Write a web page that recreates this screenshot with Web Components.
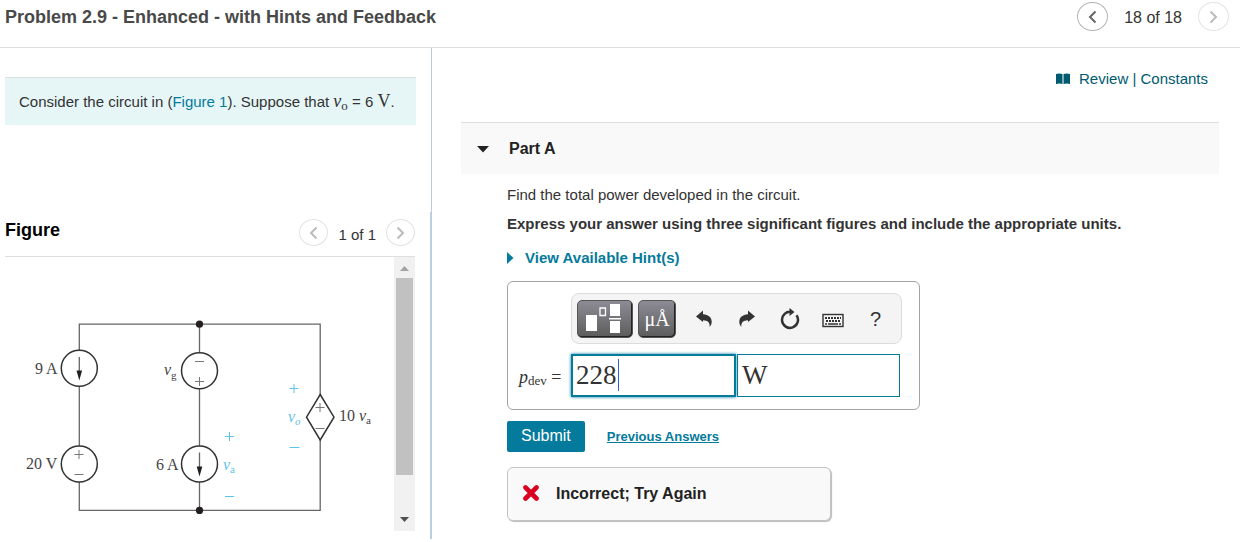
<!DOCTYPE html>
<html lang="en">
<head>
<meta charset="utf-8">
<meta name="viewport" content="width=device-width, initial-scale=1">
<title>Problem 2.9</title>
<style>
body {
  margin: 0;
  background: #fff;
  color: #333;
  font-family: "Liberation Sans", Arial, sans-serif;
  font-size: 15px;
  line-height: 20px;
  --teal: #047a9c;
  --teal-dark: #005a70;
  --rule: #dedede;
  --math: "Liberation Serif", "Times New Roman", serif;
}
</style>
</head>
<body>
<problem-page></problem-page>

<script>
class pagerNav extends HTMLElement {
  constructor() {
    super();
    this.shadowDOM = this.attachShadow({mode: 'open'});
  }

  connectedCallback() {
    const off = (dir) => this.getAttribute('disabled').includes(dir) ? 'disabled' : '';
    this.shadowDOM.innerHTML = `
    <style>
    :host {
        display: flex;
        gap: 16px;
        --size: 31px;
    }
    :host([small]) {
        gap: 10px;
        --size: 29px;
    }
    button {
        display: flex;
        align-items: center;
        justify-content: center;
        width: var(--size);
        height: calc(var(--size) - 2px);
        padding: 0;
        border: 1px solid #b4b4b4;
        border-radius: 50%;
        background: #fff;
        color: #666;
    }
    button:disabled {
        border-color: #e3e3e3;
        color: #bbb;
    }
    svg {
        fill: none;
        stroke: currentColor;
        stroke-width: 2;
    }
    span {
        padding-top: 6px;
    }
    </style>
    <button type="button" aria-label="Previous" ${off('prev')}>
        <svg width="9" height="14" viewBox="0 0 9 14"><path d="M7.5 1.500 2 7l5.500 5.500"/></svg>
    </button>
    <span><slot></slot></span>
    <button type="button" aria-label="Next" ${off('next')}>
        <svg width="9" height="14" viewBox="0 0 9 14"><path d="M1.5 1.500 7 7l-5.500 5.500"/></svg>
    </button>
    `
  }
}

class problemHeader extends HTMLElement {
  constructor() {
    super();
    this.shadowDOM = this.attachShadow({mode: 'open'});
    this.shadowDOM.innerHTML = `
    <style>
    :host {
        display: flex;
        justify-content: space-between;
        align-items: flex-start;
        min-height: 45px;
        padding: 2px 11px 0 5px;
        border-bottom: 1px solid var(--rule);
    }
    h1 {
        margin: 0;
        padding-top: 5px;
        color: #494949;
        font-size: 18px;
        font-weight: 700;
    }
    pager-nav {
        font-size: 16px;
    }
    </style>
    <h1><slot></slot></h1>
    <pager-nav disabled="next">18 of 18</pager-nav>
    `
  }
}

class problemIntro extends HTMLElement {
  constructor() {
    super();
    this.shadowDOM = this.attachShadow({mode: 'open'});
    this.shadowDOM.innerHTML = `
    <style>
    :host {
        display: block;
        min-height: 135px;
        padding: 29px 15px 0 5px;
        border-right: 1px solid #bccbde;
    }
    p {
        margin: 0;
        padding: 14px 14px 13px;
        border-top: 1px solid #dadfdf;
        background: #e6f6f7;
    }
    a {
        color: var(--teal);
        text-decoration: none;
    }
    i, b {
        font-family: var(--math);
        font-size: 18px;
        font-weight: 400;
        line-height: 1px;
    }
    sub {
        font-family: var(--math);
        font-size: 13px;
        line-height: 1px;
        vertical-align: -3px;
    }
    </style>
    <p>Consider the circuit in (<a href="#figure">Figure 1</a>). Suppose that <i>v</i><sub>o</sub> = 6 <b>V</b>.</p>
    `
  }
}

class circuitDiagram extends HTMLElement {
  constructor() {
    super();
    this.shadowDOM = this.attachShadow({mode: 'open'});
    this.shadowDOM.innerHTML = `
    <style>
    :host {
        display: block;
    }
    svg {
        display: block;
        max-width: 100%;
    }
    .wire {
        fill: none;
        stroke: #666;
        stroke-width: 1.3;
    }
    .source {
        fill: #fff;
        stroke: #333;
        stroke-width: 1.5;
    }
    .sign {
        fill: none;
        stroke: #777;
    }
    .solid {
        fill: #231f20;
    }
    text {
        fill: #444;
        font-family: var(--math);
        font-size: 16px;
    }
    .v {
        font-style: italic;
    }
    .sub {
        font-size: 11px;
    }
    .blue text {
        fill: #5bc4ea;
    }
    .blue path {
        stroke: #5bc4ea;
    }
    </style>
    <svg width="389" height="274" viewBox="0 0 389 274" role="img" aria-label="Circuit">
        <path class="wire" d="M74.3 67.2H315.2V253.4H74.3ZM194.5 67.2V253.4"/>
        <g class="solid">
            <circle cx="194.5" cy="67.2" r="3.6"/>
            <circle cx="194.5" cy="253.4" r="3.6"/>
        </g>
        <g class="source">
            <circle cx="74.3" cy="111.2" r="18"/>
            <circle cx="74.3" cy="207" r="18"/>
            <circle cx="194.5" cy="113.8" r="18"/>
            <circle cx="194.5" cy="207" r="18"/>
            <path d="M315.2 137.5 329 160.2 315.2 183 301.5 160.2Z"/>
        </g>
        <path class="wire" d="M74.3 100V116M194.5 195.5V211"/>
        <path class="solid" d="M71.5 113.5h5.6l-2.8 10zM191.7 209.5h5.6l-2.8 10z"/>
        <path class="sign" d="M190 104.500h9M190 124.500h9M194.500 120v9M69.500 197.500h9M74 193v9M69.500 217.500h9M310.500 150.500h9M315 146v9M310.500 171.500h9"/>
        <text x="30" y="117">9 A</text>
        <text x="21" y="212">20 V</text>
        <text x="151" y="213">6 A</text>
        <text x="159" y="118"><tspan class="v">v</tspan><tspan class="sub" dy="4">g</tspan></text>
        <text x="334" y="164">10 <tspan class="v">v</tspan><tspan class="sub" dy="3">a</tspan></text>
        <g class="blue">
            <path class="sign" d="M284.500 131.500h9M289 127v9M284.500 190.500h10M220 179.500h9M224.500 175v9M220 239.500h9"/>
            <text x="283" y="165"><tspan class="v">v</tspan><tspan class="v sub" dy="3">o</tspan></text>
            <text x="218" y="213"><tspan class="v">v</tspan><tspan class="sub" dy="3">a</tspan></text>
        </g>
    </svg>
    `
  }
}

class figurePanel extends HTMLElement {
  constructor() {
    super();
    this.shadowDOM = this.attachShadow({mode: 'open'});
    this.shadowDOM.innerHTML = `
    <style>
    :host {
        display: block;
        padding: 0 15px 8px 5px;
        border-right: 2px solid #bccfe2;
    }
    header {
        display: flex;
        justify-content: space-between;
        min-height: 37px;
        padding-top: 7px;
        border-bottom: 1px solid var(--rule);
    }
    h2 {
        margin: 0;
        padding-top: 1px;
        color: #000;
        font-size: 18px;
    }
    .view {
        display: flex;
        justify-content: space-between;
    }
    .bar {
        display: flex;
        flex-direction: column;
        align-items: center;
        flex: none;
        width: 21px;
        background: #f1f1f1;
    }
    .bar svg {
        flex: none;
    }
    .thumb {
        width: 17px;
        flex: 1;
        background: #c1c1c1;
    }
    .track {
        height: 35px;
    }
    </style>
    <header>
        <h2>Figure</h2>
        <pager-nav small disabled="prev next">1 of 1</pager-nav>
    </header>
    <div class="view" id="figure">
        <slot></slot>
        <div class="bar">
            <svg width="21" height="21" viewBox="0 0 21 21"><path d="M6 14l4.5-5 4.5 5z" fill="#a3a3a3"/></svg>
            <div class="thumb"></div>
            <div class="track"></div>
            <svg width="21" height="21" viewBox="0 0 21 21"><path d="M6 7l4.5 5 4.5-5z" fill="#505050"/></svg>
        </div>
    </div>
    `
  }
}

class answerToolbar extends HTMLElement {
  constructor() {
    super();
    this.shadowDOM = this.attachShadow({mode: 'open'});
    this.shadowDOM.innerHTML = `
    <style>
    :host {
        display: flex;
        align-items: center;
        padding: 6px 2px 5px 5px;
        border: 1px solid #dcdcdc;
        border-radius: 8px;
        background: #f4f4f4;
    }
    button {
        display: flex;
        align-items: center;
        justify-content: center;
        width: 43px;
        height: 38px;
        padding: 0;
        border: 0;
        background: none;
        color: #333;
        font: 20px/24px "Liberation Sans", Arial, sans-serif;
    }
    .dark {
        width: 38px;
        margin-right: 6px;
        border: 1px solid #555;
        border-radius: 5px;
        background: linear-gradient(#8d8b95, #5c5c5c);
        box-shadow: inset -1px -1px 0 #222;
        color: #fff;
        font: 20px/24px var(--math);
    }
    .wide {
        width: 56px;
        margin-right: 5px;
    }
    </style>
    <button type="button" class="dark wide" aria-label="Templates">
        <svg width="38" height="32" viewBox="0 0 38 32" fill="#fff">
            <path d="M0 12h11v16H0zM24 1h10v12H24zM24 18h10v12H24zM23 15h12v1.500H23z"/>
            <path d="M14 5h5.500v7.500H14z" fill="none" stroke="#fff" stroke-width="1.300"/>
        </svg>
    </button>
    <button type="button" class="dark">μÅ</button>
    <button type="button" aria-label="Undo">
        <svg width="18" height="18" viewBox="0 0 18 18" fill="#333"><path d="M1 6.500 8 .5v3.700c5.500.3 8.700 3.300 8.700 7.500 0 2-.7 3.700-2 5.300.3-4.200-1.700-6.500-6.700-6.700V12z"/></svg>
    </button>
    <button type="button" aria-label="Redo">
        <svg width="18" height="18" viewBox="0 0 18 18" fill="#333"><path d="M17 6.500 10 .5v3.700c-5.500.3-8.700 3.300-8.700 7.500 0 2 .7 3.700 2 5.300-.3-4.200 1.700-6.500 6.700-6.700V12z"/></svg>
    </button>
    <button type="button" aria-label="Reset">
        <svg width="20" height="22" viewBox="0 0 20 22"><path d="M11.500 4A8 8 0 1 0 16.500 7.200" fill="none" stroke="#333" stroke-width="2.500"/><path d="M9.500 0l5 4-5 4z" fill="#333"/></svg>
    </button>
    <button type="button" aria-label="Keyboard shortcuts">
        <svg width="22" height="18" viewBox="0 0 22 18" fill="none" stroke="#333"><rect x="1" y="4.500" width="20" height="12" stroke-width="1.400"/><path d="M3 8h16M4 11h14" stroke-width="2" stroke-dasharray="2 1"/><path d="M3 14h2M6 14h10M17 14h2" stroke-width="1.500"/></svg>
    </button>
    <button type="button" aria-label="Help">?</button>
    `
  }
}

class answerBox extends HTMLElement {
  constructor() {
    super();
    this.shadowDOM = this.attachShadow({mode: 'open'});
    this.shadowDOM.innerHTML = `
    <style>
    :host {
        display: grid;
        grid-template-columns: 52px auto;
        gap: 10px 0;
        width: fit-content;
        padding: 11px 17px 12px 11px;
        border: 1px solid #a3a3a3;
        border-radius: 6px;
    }
    answer-toolbar {
        grid-column: 2;
    }
    label {
        align-self: center;
        padding-top: 2px;
        font-family: var(--math);
        font-size: 18px;
    }
    sub {
        font-size: 13px;
        line-height: 1px;
        vertical-align: -2px;
    }
    .fields {
        display: flex;
        gap: 1px;
        padding-right: 2px;
    }
    .value {
        position: relative;
        display: flex;
    }
    /* text caret, drawn over the value */
    .value::after {
        content: "";
        position: absolute;
        left: 47px;
        top: 5px;
        width: 1px;
        height: 32px;
        background: #2f5fd8;
    }
    input {
        box-sizing: border-box;
        width: 163px;
        height: 43px;
        padding: 0 4px;
        border: 1px solid var(--teal);
        border-radius: 0;
        background: #fff;
        color: #333;
        font: 27px/32px var(--math);
    }
    .value input {
        width: 165px;
        padding: 0 3px;
        border-width: 2px;
        box-shadow: 0 0 3px var(--teal);
    }
    </style>
    <answer-toolbar></answer-toolbar>
    <label for="value"><i>p</i><sub>dev</sub> =</label>
    <div class="fields">
        <div class="value"><input id="value" type="text" value="228"></div>
        <input type="text" value="W" aria-label="Units">
    </div>
    `
  }
}

class answerFeedback extends HTMLElement {
  constructor() {
    super();
    this.shadowDOM = this.attachShadow({mode: 'open'});
    this.shadowDOM.innerHTML = `
    <style>
    :host {
        display: flex;
        align-items: center;
        gap: 17px;
        box-sizing: border-box;
        max-width: 324px;
        padding: 16px 15px;
        border: 1px solid #c4c4c4;
        border-radius: 6px;
        background: #f9f9f9;
        box-shadow: 1px 1px 1px #bbb;
        color: #222;
        font-size: 16px;
        font-weight: 700;
    }
    svg {
        margin-bottom: 3px;
    }
    </style>
    <svg width="16" height="16" viewBox="0 0 16 16"><path d="M2.5 2.5l11 11M13.5 2.5l-11 11" stroke="#db0020" stroke-width="4.6" stroke-linecap="round"/></svg>
    <slot></slot>
    `
  }
}

class problemPart extends HTMLElement {
  constructor() {
    super();
    this.shadowDOM = this.attachShadow({mode: 'open'});
    this.shadowDOM.innerHTML = `
    <style>
    :host {
        display: block;
    }
    h2 {
        display: flex;
        align-items: center;
        gap: 20px;
        margin: 0;
        padding: 16px 16px 15px;
        border-top: 1px solid var(--rule);
        background: #f9f9f9;
        color: #222;
        font-size: 16px;
    }
    .body {
        padding: 11px 0 0 46px;
    }
    p {
        margin: 0 0 9px;
    }
    .hints {
        display: flex;
        align-items: center;
        gap: 11px;
        width: fit-content;
        margin: 14px 0 13px;
        padding: 0;
        border: 0;
        background: none;
        color: var(--teal);
        font: inherit;
        font-weight: 700;
    }
    .actions {
        display: flex;
        align-items: center;
        gap: 22px;
        margin: 11px 0 15px;
    }
    .submit {
        padding: 5px 14px 6px;
        border: 0;
        border-radius: 2px;
        background: var(--teal);
        color: #fff;
        font: inherit;
        font-size: 16px;
    }
    a {
        color: var(--teal);
        font-size: 13px;
        font-weight: 700;
    }
    </style>
    <h2>
        <svg width="12" height="7" viewBox="0 0 12 7"><path d="M0 0h12L6 6.5z" fill="#222"/></svg>
        <slot name="title"></slot>
    </h2>
    <div class="body">
        <p><slot name="question"></slot></p>
        <p><b><slot name="format"></slot></b></p>
        <button type="button" class="hints">
            <svg width="7" height="12" viewBox="0 0 7 12"><path d="M0 0l6.500 6L0 12z" fill="#047a9c"/></svg>
            View Available Hint(s)
        </button>
        <answer-box></answer-box>
        <div class="actions">
            <button type="button" class="submit">Submit</button>
            <a href="#previous">Previous Answers</a>
        </div>
        <answer-feedback>Incorrect; Try Again</answer-feedback>
    </div>
    `
  }
}

class problemPage extends HTMLElement {
  constructor() {
    super();
    this.shadowDOM = this.attachShadow({mode: 'open'});
    this.shadowDOM.innerHTML = `
    <style>
    :host {
        display: block;
    }
    .columns {
        display: grid;
        grid-template-columns: minmax(0, 54fr) minmax(0, 101fr);
        align-items: start;
    }
    main {
        padding: 21px 21px 0 29px;
    }
    nav {
        display: flex;
        justify-content: flex-end;
        align-items: center;
        margin: 0 11px 33px 0;
        color: var(--teal-dark);
    }
    nav svg {
        margin-right: 9px;
    }
    nav a {
        color: inherit;
        text-decoration: none;
    }
    </style>
    <problem-header>Problem 2.9 - Enhanced - with Hints and Feedback</problem-header>
    <div class="columns">
        <aside>
            <problem-intro></problem-intro>
            <figure-panel><circuit-diagram></circuit-diagram></figure-panel>
        </aside>
        <main>
            <nav>
                <svg width="14" height="12" viewBox="0 0 14 12" fill="#005a70"><path d="M0 1q3-1 6.500 0v10q-3-1-6.500 0zM7.500 1q3-1 6.500 0v10q-3-1-6.500 0z"/></svg>
                <a href="#review">Review</a>&nbsp;|&nbsp;<a href="#constants">Constants</a>
            </nav>
            <problem-part>
                <span slot="title">Part A</span>
                <span slot="question">Find the total power developed in the circuit.</span>
                <span slot="format">Express your answer using three significant figures and include the appropriate units.</span>
            </problem-part>
        </main>
    </div>
    `
  }
}

customElements.define('pager-nav', pagerNav);
customElements.define('problem-header', problemHeader);
customElements.define('problem-intro', problemIntro);
customElements.define('circuit-diagram', circuitDiagram);
customElements.define('figure-panel', figurePanel);
customElements.define('answer-toolbar', answerToolbar);
customElements.define('answer-box', answerBox);
customElements.define('answer-feedback', answerFeedback);
customElements.define('problem-part', problemPart);
customElements.define('problem-page', problemPage);
</script>
</body>
</html>
